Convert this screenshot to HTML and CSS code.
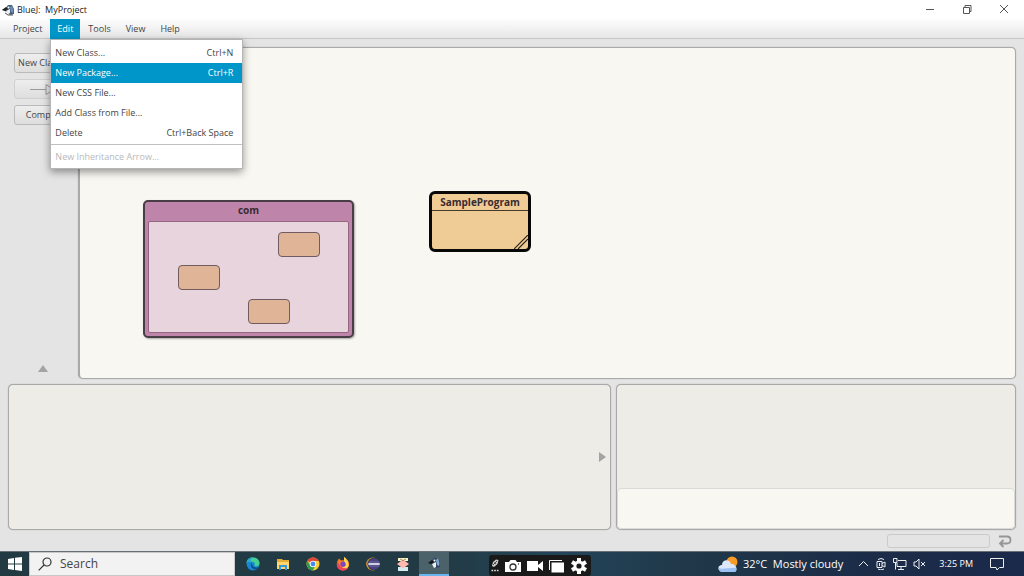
FILE: index.html
```html
<!DOCTYPE html>
<html lang="en">
  <head>
    <meta charset="UTF-8" />
    <meta name="viewport" content="width=device-width, initial-scale=1.0" />
    <title>BlueJ: MyProject</title>
    <link rel="stylesheet" href="styles.css">
  </head>

  <body>
    <header class="titlebar">
      <svg class="app-icon" width="13" height="12" viewBox="0 0 13 12">
        <path d="M0 6L4 3.500 6 1 10 1 12 5 12 10 8 11 5 8Z" fill="#4a6079"/>
        <path d="M0 6L4 3 6 5 4 7Z" fill="#222"/>
        <path d="M4 7L8 5 8 9 6 10Z" fill="#eef2f5"/>
        <path d="M8 3L10 2 11.500 6 11 9 9 8Z" fill="#6d8fb8"/>
        <path d="M3 9L6 11 11 11" fill="none" stroke="#555"/>
        <circle cx="6.500" cy="3.500" r="1" fill="#fff"/>
      </svg>
      <h1>BlueJ:&nbsp; MyProject</h1>
      <div class="window-buttons">
        <button aria-label="Minimize"><svg width="10" height="10"><path d="M1 4.500H9" /></svg></button>
        <button aria-label="Restore"><svg width="10" height="10"><path d="M1.500 2.500H7.500V8.500H1.500ZM3 2V.5H9V6.500H8" /></svg></button>
        <button aria-label="Close"><svg width="10" height="10"><path d="M1 0L9 8M9 0L1 8" /></svg></button>
      </div>
    </header>

    <nav class="menubar">
      <button>Project</button>
      <div class="menu">
        <button class="open">Edit</button>
        <div class="dropdown">
          <button><span>New Class...</span><span>Ctrl+N</span></button>
          <button class="selected"><span>New Package...</span><span>Ctrl+R</span></button>
          <button><span>New CSS File...</span></button>
          <button><span>Add Class from File...</span></button>
          <button><span>Delete</span><span>Ctrl+Back Space</span></button>
          <hr>
          <button disabled><span>New Inheritance Arrow...</span></button>
        </div>
      </div>
      <button>Tools</button>
      <button>View</button>
      <button>Help</button>
    </nav>

    <main class="workspace">
      <div class="upper">
        <aside class="tools">
          <button class="tool">New Class...</button>
          <button class="tool faded" aria-label="Inheritance arrow">
            <svg width="26" height="12"><path d="M0 6.500H16M16 1.500V11.500L24 6.500Z" fill="none" stroke="#999"/></svg>
          </button>
          <button class="tool">Compile</button>
          <svg class="expand" width="10" height="7"><path d="M5 0L10 7H0Z" fill="#a3a3a3"/></svg>
        </aside>
        <section class="diagram">
          <div class="package">
            <h2>com</h2>
            <div class="package-body">
              <i class="mini mini-a"></i>
              <i class="mini mini-b"></i>
              <i class="mini mini-c"></i>
            </div>
          </div>
          <div class="class-box">
            <h2>SampleProgram</h2>
            <svg width="14" height="14"><path d="M0 14L14 0M4 14L14 4" stroke="#2c241a" stroke-width="1.2"/></svg>
          </div>
        </section>
      </div>
      <div class="lower">
        <section class="bench">
          <svg width="7" height="10"><path d="M0 0L7 5 0 10Z" fill="#a3a3a3"/></svg>
        </section>
        <section class="codepad">
          <textarea class="codepad-input" aria-label="Codepad"></textarea>
        </section>
      </div>
    </main>

    <div class="statusbar">
      <div class="progress"></div>
      <svg width="14" height="14" viewBox="0 0 14 14" fill="none" stroke="#969696" stroke-width="1.8"><path d="M1 2.500H9Q12.500 2.500 12.500 6T9 9.500H2M5.500 6L2 9.500 5.500 13"/></svg>
    </div>

    <footer class="taskbar">
      <button class="start" aria-label="Start">
        <svg width="14" height="14" viewBox="0 0 14 14" fill="#fff"><path d="M0 2L6 1V6.500H0ZM7 .8L14 0V6.500H7ZM0 7.500H6V13L0 12ZM7 7.500H14V14L7 13Z"/></svg>
      </button>
      <label class="search">
        <svg width="14" height="14" viewBox="0 0 14 14" fill="none" stroke="#333" stroke-width="1.2"><circle cx="9" cy="5" r="4"/><path d="M6 8L.7 13.300"/></svg>
        <input type="text" placeholder="Search" aria-label="Search">
      </label>
      <div class="apps">
        <button aria-label="Edge">
          <svg width="14" height="14" viewBox="0 0 14 14">
            <circle cx="7" cy="7" r="6.500" fill="#1688cf"/>
            <path d="M.6 6C1 2 4 .4 7 .5 11 .6 13.500 3.500 13.500 6.200 13.500 8.500 11.500 9.500 9.500 9.200 8 9 8.500 8.300 8.800 7.500 9 5.500 7 4.500 5 4.500 3 4.500 1.500 5 .6 6Z" fill="#45cf91"/>
            <path d="M.6 6C1 2 4 .4 7 .5 4 2 5 4.500 5 4.500 3 4.500 1.500 5 .6 6Z" fill="#28a9cf"/>
            <path d="M5.500 6C4 8 5 12 9 12.500 11 12.500 12 11.500 12.700 10.200 9 11 7 10 6.500 8.500Z" fill="#0d4d91"/>
          </svg>
        </button>
        <button aria-label="File Explorer">
          <svg width="14" height="14" viewBox="0 0 14 14"><path d="M1 2H6L7 3H13V12H1Z" fill="#e8ac35"/><path d="M1 5H13V12H1Z" fill="#ffd66c"/><path d="M3 8H11V13H9V10H5V13H3Z" fill="#3997d7"/></svg>
        </button>
        <button aria-label="Chrome">
          <svg width="14" height="14" viewBox="0 0 14 14"><circle cx="7" cy="7" r="6.500" fill="#f7cc37"/><path d="M7 7L1.400 3.750A6.500 6.500 0 0 1 12.700 4H7Z" fill="#df4637"/><path d="M1.400 3.750A6.500 6.500 0 0 0 6.700 13.500L9.500 8.500H4.300Z" fill="#2e9d50"/><circle cx="7" cy="7" r="3.200" fill="#fff"/><circle cx="7" cy="7" r="2.400" fill="#4389ee"/></svg>
        </button>
        <button aria-label="Firefox">
          <svg width="14" height="14" viewBox="0 0 14 14"><path d="M2 3L3 1.500 5 3.500C6 3 7 3 8 3.500L8 0C10 1 10.500 2 11 3L12 3.500C15 9 11 13.500 7 13.500 2 13.500-1 8 2 3Z" fill="#ff7b27"/><path d="M8 0C11 2 13 5 12.500 9 11 12 8 12 6 11L10 8 8 4Z" fill="#ffd34d"/><path d="M1.500 5C-.3 9 2 13.500 7 13.500 9 13.500 11 12.500 12 11 8 12 4 11 3 7Z" fill="#f0415d"/><circle cx="7" cy="7.200" r="2.600" fill="#7946c4"/></svg>
        </button>
        <button aria-label="Eclipse">
          <svg width="14" height="14" viewBox="0 0 14 14"><circle cx="6.700" cy="7" r="6.500" fill="#ed9a35"/><circle cx="7.800" cy="7" r="6.300" fill="#223a43"/><circle cx="8" cy="7" r="5.700" fill="#4a4382"/><path d="M2.500 5H13.500M2.500 9H13.500" stroke="#8c87b3" stroke-width=".6"/><path d="M2.300 6H13.700V8H2.300Z" fill="#d0d0e2"/></svg>
        </button>
        <button aria-label="Diagram tool">
          <svg width="14" height="14" viewBox="0 0 14 14"><path d="M2 1H12V4H2Z" fill="#fff2c4"/><path d="M2 10H12V14H2Z" fill="#d4ebf1"/><path d="M7 2.500L13 7 7 11.500 1 7Z" fill="#ffb9ae"/><path d="M4 2L7 3.500 10 2M7 3V4" fill="none" stroke="#746e5e" stroke-width=".7"/></svg>
        </button>
        <button class="active" aria-label="BlueJ">
          <svg width="13" height="12" viewBox="0 0 13 12"><path d="M0 6L4 3.500 6 1 10 1 12 5 12 10 8 11 5 8Z" fill="#34465c"/><path d="M0 6L4 3 6 5 4 7Z" fill="#15191c"/><path d="M4 7L8 5 8 10 6 11Z" fill="#eef2f5"/><path d="M8 3L10 1 11.500 6 11 9 9 8Z" fill="#7fa5cd"/><circle cx="6.500" cy="3.500" r="1" fill="#fff"/></svg>
        </button>
      </div>
      <div class="recorder">
        <svg width="8" height="14" viewBox="0 0 8 14"><path d="M1 7L2 3 5 .5 7.500 1 6.500 5 3 8Z" fill="#ccc"/><path d="M2 6L6 2M3 3.500L5 5" stroke="#333" stroke-width=".8"/><path d="M.5 11.500H7.500" stroke="#ddd" stroke-width="1.500" stroke-dasharray="1.700 1"/></svg>
        <svg width="16" height="14" viewBox="0 0 16 14"><path d="M0 3H4L5.500 1H10.500L12 3H16V13H0Z" fill="#fff"/><circle cx="8" cy="8" r="3" fill="none" stroke="#333" stroke-width="1.300"/><circle cx="13.500" cy="5" r=".7" fill="#333"/></svg>
        <svg width="16" height="14" viewBox="0 0 16 14" fill="#fff"><path d="M0 2H11V12H0ZM11 6L16 2V12L11 8Z"/></svg>
        <svg width="16" height="14" viewBox="0 0 16 14"><path d="M.5 11V1.500H13" fill="none" stroke="#fff"/><path d="M2.500 3.500H15V13.500H2.500Z" fill="#fff"/></svg>
        <svg width="16" height="16" viewBox="0 0 16 16"><g stroke="#fff" stroke-width="4"><path d="M8 0V16M1 4L15 12M15 4L1 12"/></g><circle cx="8" cy="8" r="5.500" fill="#fff"/><circle cx="8" cy="8" r="2.600" fill="#1c1c1c"/></svg>
      </div>
      <div class="tray">
        <svg class="weather" width="20" height="17" viewBox="0 0 20 17"><circle cx="14" cy="6" r="5.500" fill="#f99c27"/><path d="M5 16C-1 16-1 9 4 9 4 3 12 3 13 8 18 7 21 15 16 16Z" fill="#dce8fa"/><path d="M.7 12C4 14 13 11 18 12 19 14 18 16 16 16H5Q1 16 .7 12Z" fill="#9cc2f5"/></svg>
        <span class="weather-text">32°C&nbsp; Mostly cloudy</span>
        <div class="tray-icons">
          <svg width="11" height="12" viewBox="0 0 11 12"><path d="M1 8L5.500 3.500 10 8"/></svg>
          <svg width="12" height="12" viewBox="0 0 12 12"><path d="M2 3.500H7V9.500H2ZM7 5.500L10 4V9L7 7.500M3 1.500Q6-.5 9 1.500M3 11Q6 13 9 11M4.500 5V8"/></svg>
          <svg width="14" height="12" viewBox="0 0 14 12"><path d="M5 2.500H13V8.500H4V5M8 9V11.500M5 11.500H11M.5 .5H4V4.500H.5ZM2.500 4V11.500"/></svg>
          <svg width="13" height="12" viewBox="0 0 13 12"><path d="M1 4H3L6 1V11L3 8H1ZM8 4L12 8M12 4L8 8"/></svg>
        </div>
        <time>3:25 PM</time>
        <svg class="notes" width="14" height="13" viewBox="0 0 14 13"><path d="M.5 .5H13.500V9.500H9.500L7 12 6 9.500H.5Z"/></svg>
      </div>
    </footer>
  </body>
</html>
```

FILE: styles.css
```css
* {
  box-sizing: border-box;
}

body {
  margin: 0;
  height: 100vh;
  display: flex;
  flex-direction: column;
  overflow: hidden;
  background: #e4e4e4;
  color: #444;
  font-family: "Open Sans", "Noto Sans", sans-serif;
  font-size: 9px;
  line-height: 20px;
}

button {
  border: 0;
  padding: 0;
  background: none;
  color: inherit;
  font: inherit;
}

svg {
  display: block;
  flex: none;
}

h1, h2 {
  margin: 0;
}

/* window frame */
.titlebar {
  display: flex;
  align-items: center;
  height: 19px;
  padding: 0 15px 0 2px;
  gap: 2px;
  background: #fff;
  color: #222;
}

.titlebar h1 {
  font-size: 9px;
  font-weight: normal;
}

.window-buttons {
  display: flex;
  gap: 27px;
  margin-left: auto;
}

.window-buttons path {
  fill: none;
  stroke: #555;
}

.menubar {
  display: flex;
  gap: 1px;
  height: 20px;
  padding-left: 6px;
  background: linear-gradient(#fdfdfd, #e6e6e6);
  border-bottom: 1px solid #c6c6c6;
}

.menubar > button,
.menu > button {
  height: 20px;
  padding: 0 7px;
}

.menu {
  position: relative;
}

.menu > .open {
  background: #0096c9;
  color: #fff;
}

.dropdown {
  position: absolute;
  z-index: 2;
  top: 20px;
  left: 0;
  width: 193px;
  padding: 3px 0 1px;
  background: #fff;
  border: 1px solid #b5b5b5;
  box-shadow: 0 3px 8px rgba(0, 0, 0, 0.4);
}

.dropdown button {
  display: flex;
  justify-content: space-between;
  width: 100%;
  padding: 0 9px 0 4px;
}

.dropdown .selected {
  background: #0096c9;
  color: #fff;
}

.dropdown button:disabled {
  color: #b8b8b8;
}

.dropdown hr {
  margin: 1px 0 2px;
  border: 0;
  border-top: 1px solid #c0c0c0;
}

/* project area */
.workspace {
  flex: 1;
  display: flex;
  flex-direction: column;
  gap: 5px;
  padding: 8px 8px 0;
}

.upper {
  flex: 332;
  display: flex;
}

.tools {
  width: 70px;
  display: flex;
  flex-direction: column;
  padding: 6px 6px 7px;
  gap: 6px;
}

.tool {
  display: flex;
  align-items: center;
  justify-content: center;
  height: 20px;
  white-space: nowrap;
  background: linear-gradient(#eee, #dedede);
  border: 1px solid #bababa;
  border-radius: 3px;
}

.faded {
  border-color: #d0d0d0;
}

.expand {
  margin: auto auto 0 24px;
}

.diagram {
  position: relative;
  flex: 1;
  background: #f8f7f1;
  border: 2px solid #a9a9a9;
  border-width: 1px 1px 1px 2px;
  border-radius: 5px;
  box-shadow: 0 0 1px #999;
}

.diagram h2 {
  font-size: 10px;
  text-align: center;
  color: #382c30;
}

.package {
  position: absolute;
  left: 63px;
  top: 152px;
  width: 211px;
  height: 138px;
  padding: 0 3px 3px;
  display: flex;
  flex-direction: column;
  background: #bf84aa;
  border: 2px solid #493e46;
  border-radius: 5px;
  box-shadow: 1px 1px 2px #aaa;
}

.package h2 {
  height: 19px;
  line-height: 17px;
}

.package-body {
  position: relative;
  flex: 1;
  background: #e8d4dd;
  border: 1px solid #946681;
  border-radius: 2px;
}

.mini {
  position: absolute;
  width: 42px;
  height: 25px;
  background: #dfb497;
  border: 1px solid #705b60;
  border-radius: 4px;
}

.mini-a {
  left: 129px;
  top: 10px;
}

.mini-b {
  left: 29px;
  top: 43px;
}

.mini-c {
  left: 99px;
  top: 77px;
}

.class-box {
  position: absolute;
  left: 349px;
  top: 143px;
  width: 102px;
  height: 61px;
  background: #efcb95;
  border: 3px solid #080808;
  border-radius: 6px;
}

.class-box h2 {
  height: 17px;
  line-height: 16px;
  border-bottom: 1px solid #443a2a;
}

.class-box svg {
  position: absolute;
  right: 0;
  bottom: 0;
}

.lower {
  flex: 146;
  display: flex;
  gap: 5px;
}

.bench,
.codepad {
  display: flex;
  background: #edece7;
  border: 1px solid #a9a9a9;
  border-radius: 5px;
  box-shadow: 0 0 1px #999;
}

.bench {
  flex: 603;
  align-items: center;
  justify-content: flex-end;
  padding-right: 4px;
}

.codepad {
  flex: 402;
  align-items: flex-end;
}

.codepad-input {
  width: 100%;
  height: 41px;
  resize: none;
  background: #f8f7f1;
  border: 1px solid #dadada;
  border-radius: 4px;
}

.statusbar {
  display: flex;
  align-items: center;
  justify-content: flex-end;
  gap: 8px;
  height: 21px;
  padding-right: 12px;
}

.progress {
  width: 103px;
  height: 14px;
  border: 1px solid #cacaca;
  border-radius: 3px;
}

/* taskbar */
.taskbar {
  display: flex;
  height: 25px;
  background: linear-gradient(90deg, #223b43 0%, #223a43 42%, #234459 55%, #203748 68%, #1b2c48 85%, #1b294a 100%);
  border-top: 1px solid #657078;
  color: #fff;
}

.start {
  width: 29px;
  display: flex;
  align-items: center;
  justify-content: center;
}

.search {
  width: 206px;
  display: flex;
  align-items: center;
  gap: 8px;
  padding-left: 8px;
  background: #f2f2f2;
  border: 1px solid #c8c8c8;
}

.search input {
  flex: 1;
  min-width: 0;
  padding: 0;
  border: 0;
  background: none;
  font: inherit;
  font-size: 12px;
}

.search input::placeholder {
  color: #444;
}

.apps {
  display: flex;
  padding-left: 3px;
}

.apps button {
  width: 30px;
  display: flex;
  align-items: center;
  justify-content: center;
}

.apps .active {
  margin-left: 1px;
  background: #4c626b;
  border-bottom: 2px solid #69b6ef;
}

.recorder {
  display: flex;
  align-items: center;
  gap: 6px;
  height: 21px;
  margin: 3px 0 0 40px;
  padding: 0 4px 0 2px;
  background: #191919;
  border-radius: 3px;
}

.tray {
  display: flex;
  align-items: center;
  margin-left: auto;
  padding-right: 20px;
}

.weather-text {
  margin: 0 15px 0 5px;
  font-size: 11px;
}

.tray-icons {
  display: flex;
  gap: 6px;
  margin-right: 13px;
}

.tray-icons path,
.notes path {
  fill: none;
  stroke: #eee;
}

.notes {
  margin-left: 17px;
}
```
